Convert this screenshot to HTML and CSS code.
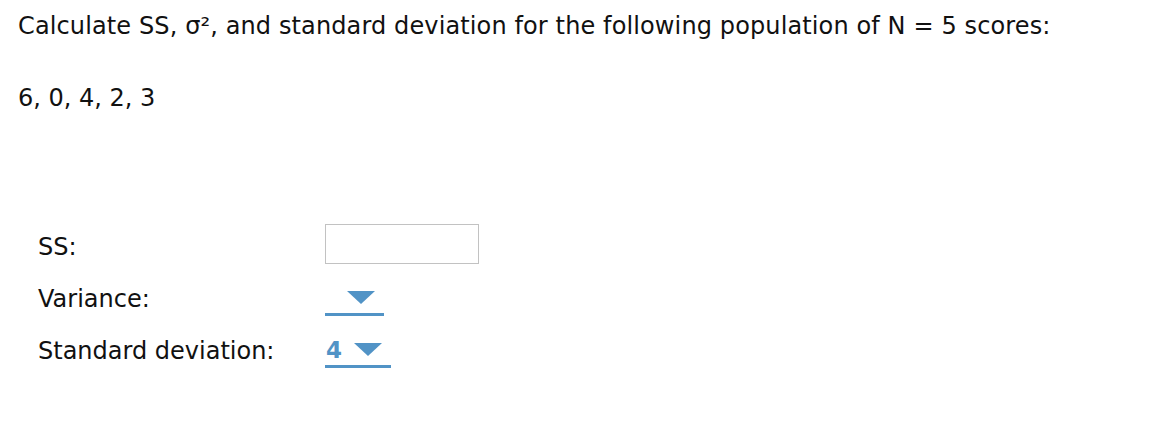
FILE: index.html
```html
<!DOCTYPE html>
<html lang="en">

<head>
  <meta charset="UTF-8">
  <title>Standard deviation</title>
  <link rel="stylesheet" href="styles.css">
</head>

<body>
  <p class="question">Calculate SS, &sigma;&sup2;, and standard deviation for the following population of N = 5 scores:</p>
  <p class="scores">6, 0, 4, 2, 3</p>

  <div class="answers">
    <div class="row">
      <span class="label">SS:</span>
      <input class="box" type="text">
    </div>
    <div class="row">
      <span class="label">Variance:</span>
      <span class="pick">
        <span class="value"></span>
        <span class="arrow"></span>
      </span>
    </div>
    <div class="row">
      <span class="label">Standard deviation:</span>
      <span class="pick">
        <span class="value">4</span>
        <span class="arrow"></span>
      </span>
    </div>
  </div>
</body>

</html>
```

FILE: styles.css
```css
body {
  margin: 0;
  padding: 12px 18px;
  font-family: "DejaVu Sans", Verdana, sans-serif;
  font-size: 24px;
  color: #111;
  background: #fff;
}

.question {
  margin: 0;
  line-height: 28px;
  letter-spacing: 0.12px;
}

.scores {
  margin: 44px 0 0;
  line-height: 28px;
}

.answers {
  margin-top: 107px;
  padding-left: 20px;
}

.row {
  display: flex;
  align-items: center;
  height: 52px;
}

.label {
  width: 287px;
  line-height: 28px;
  padding-top: 3px;
}

.box {
  width: 154px;
  height: 40px;
  box-sizing: border-box;
  border: 1px solid #c2c2c2;
  margin: -2px 0 0;
}

/* dropdown with blue underline */
.pick {
  display: flex;
  align-items: flex-start;
  gap: 12px;
  height: 29px;
  box-sizing: border-box;
  padding: 0 9px 0 1px;
  margin-top: 8px;
  border-bottom: 3px solid #5193c6;
  color: #5193c6;
  font-size: 23px;
  font-weight: bold;
  line-height: 1;
}

.value {
  min-width: 9px;
}

.arrow {
  width: 0;
  height: 0;
  margin-top: 4px;
  border-left: 14px solid transparent;
  border-right: 14px solid transparent;
  border-top: 13px solid #5193c6;
}
```
